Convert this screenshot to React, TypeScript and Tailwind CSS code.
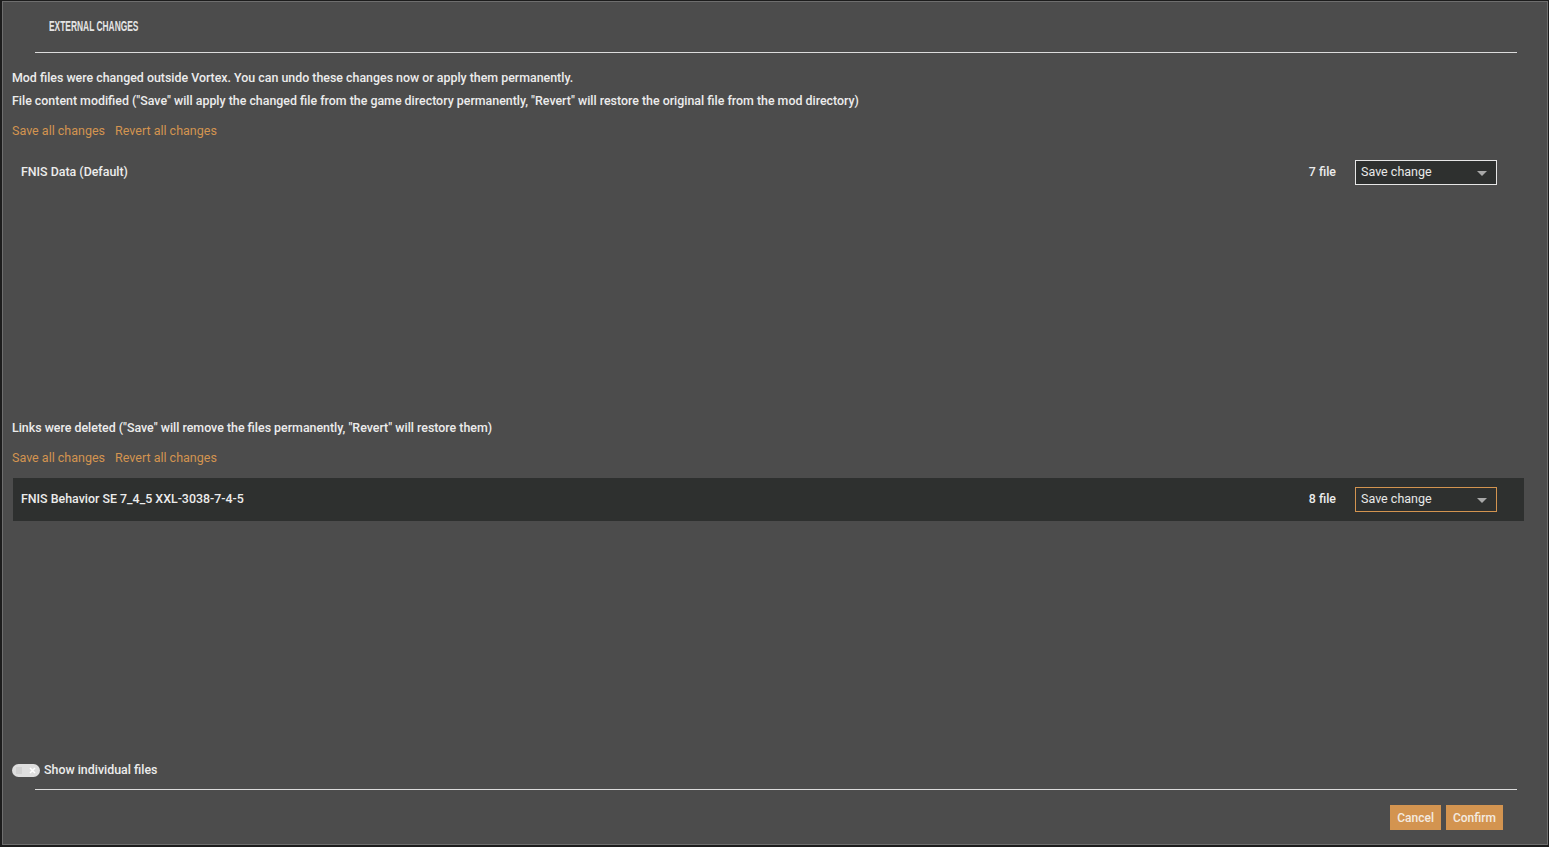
import React from 'react'

const FONT = { fontFamily: 'Roboto, "Liberation Sans", sans-serif' }

function ChangeSelect({ focused }: { focused?: boolean }) {
  return (
    <div
      className={`flex h-[25px] w-[142px] items-center justify-between bg-[#2e302f] pl-[5px] pr-[9px] text-[12.5px] text-[#e8e8e8] border ${
        focused ? 'border-[#d39450]' : 'border-[#e6e6e6]'
      }`}
    >
      <span>Save change</span>
      <svg width="10" height="5" viewBox="0 0 10 5" className="mt-[2px]">
        <path d="M0 0 L10 0 L5 5 Z" fill="#a8a8a8" />
      </svg>
    </div>
  )
}

function ModRow({ name, count, dark }: { name: string; count: string; dark?: boolean }) {
  return (
    <div className={`flex h-[43px] items-center pl-[8px] pr-[27px] ${dark ? 'bg-[#2e302f]' : ''}`}>
      <span className="flex-1 text-[12.4px] font-medium text-[#ececec]">{name}</span>
      <span className="mr-[19px] text-[12.4px] font-medium text-[#ececec]">{count}</span>
      <ChangeSelect focused={dark} />
    </div>
  )
}

function Links() {
  return (
    <div className="flex gap-[10px] text-[12.5px] text-[#d39450]">
      <span>Save all changes</span>
      <span>Revert all changes</span>
    </div>
  )
}

export default function App() {
  return (
    <div className="h-[847px] w-[1549px] bg-[#1c1c1c] pt-px pl-[2px] pr-[1px] pb-[2px]" style={FONT}>
      <div className="flex h-full flex-col border border-[#6e6e6e] bg-[#4c4c4c]">
        {/* header */}
        <div className="ml-[32px] mr-[30px] flex h-[51px] items-center border-b border-[#dcdcdc] pl-[14px] pb-[2px]">
          <h1
            className="inline-block origin-left scale-x-[0.6] text-[14px] font-bold uppercase text-[#e4e4e4]"
            style={{ fontFamily: '"Liberation Sans", Arial, sans-serif' }}
          >
            External Changes
          </h1>
        </div>

        {/* body */}
        <div className="flex flex-1 flex-col pl-[9px] pr-[23px]">
          <p className="mt-[13px] text-[12.4px] font-medium leading-[23px] text-[#ececec]">
            Mod files were changed outside Vortex. You can undo these changes now or apply them permanently.
          </p>
          <p className="text-[12.4px] font-medium leading-[23px] text-[#ececec]">
            File content modified ("Save" will apply the changed file from the game directory permanently, "Revert" will restore the original file from the mod directory)
          </p>
          <div className="mt-[7px] leading-[23px]">
            <Links />
          </div>
          <div className="mt-[9px] h-[265px] pl-px">
            <ModRow name="FNIS Data (Default)" count="7 file" />
          </div>

          <p className="text-[12.4px] font-medium leading-[23px] text-[#ececec]">
            Links were deleted ("Save" will remove the files permanently, "Revert" will restore them)
          </p>
          <div className="mt-[7px] leading-[23px]">
            <Links />
          </div>
          <div className="mt-[9px] flex-1 pl-px">
            <ModRow name="FNIS Behavior SE 7_4_5 XXL-3038-7-4-5" count="8 file" dark />
          </div>

          <div className="mb-[9px] flex items-center gap-[4px]">
            <div className="flex h-[13px] w-[28px] items-center justify-between rounded-full bg-[#dedede] px-[4px]">
              <svg width="6" height="7" viewBox="0 0 6 7">
                <path d="M1 0 V7 M3 0 V7 M5 0 V7" stroke="#c4c4c4" strokeWidth="1" />
              </svg>
              <svg width="7" height="7" viewBox="0 0 7 7">
                <path d="M1 1 L6 6 M6 1 L1 6" stroke="#ffffff" strokeWidth="1.5" />
              </svg>
            </div>
            <span className="text-[12.4px] font-medium text-[#ececec]">Show individual files</span>
          </div>
        </div>

        {/* footer */}
        <div className="ml-[32px] mr-[30px] flex h-[55px] items-start justify-end gap-[5px] border-t border-[#dcdcdc] pt-[15px] pr-[14px]">
          <button className="h-[25px] bg-[#d39450] px-[7px] text-[12px] font-medium text-[#f4ebe0]">Cancel</button>
          <button className="h-[25px] bg-[#d39450] px-[7px] text-[12px] font-medium text-[#f4ebe0]">Confirm</button>
        </div>
      </div>
    </div>
  )
}
